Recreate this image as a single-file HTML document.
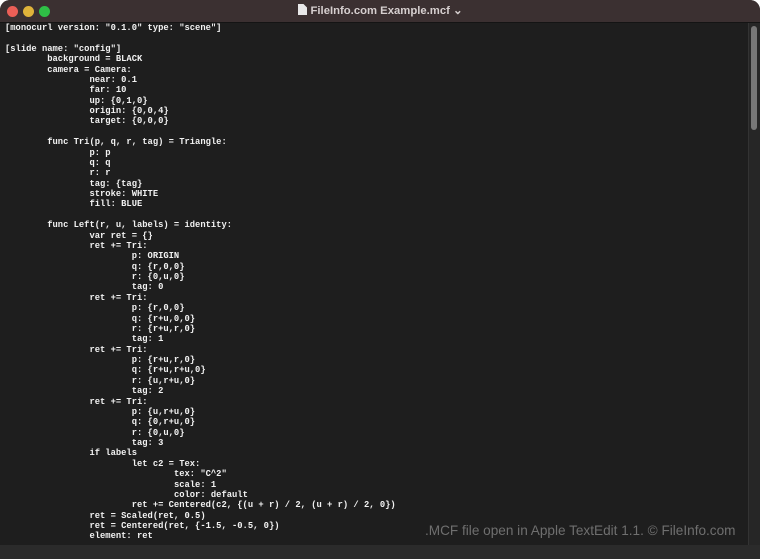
<!DOCTYPE html>
<html><head><style>
html,body{margin:0;padding:0;width:760px;height:559px;overflow:hidden;background:#fff}
.win{position:absolute;left:0;top:0;width:760px;height:559px;background:#2b2b2b;border-radius:10px 10px 0 0;overflow:hidden}
.tb{position:absolute;left:0;top:0;width:760px;height:22px;background:#3b3031;border-bottom:1px solid #141414}
.dot{position:absolute;top:6px;width:11px;height:11px;border-radius:50%}
.title{position:absolute;left:0;right:0;top:4px;text-align:center;font:bold 11.3px "Liberation Sans",sans-serif;color:#d6cfcf}
.ed{position:absolute;left:0;top:23px;width:748px;height:522px;background:#1e1e1e}
pre{margin:0;position:absolute;left:5px;top:0px;font:bold 8.8px/10.37px "Liberation Mono",monospace;color:#f2f2f2;tab-size:8;-moz-tab-size:8}
.sb{position:absolute;left:748px;top:23px;width:12px;height:522px;background:#262626;border-left:1px solid #333}
.th{position:absolute;left:751px;top:26px;width:6px;height:104px;border-radius:3px;background:#777}
.wm{position:absolute;left:425px;font:13.6px "Liberation Sans",sans-serif;color:#6f6f6f}
</style></head><body>
<div class="win">
<div class="tb">
<div class="dot" style="left:7px;background:#ec5f57"></div>
<div class="dot" style="left:23px;background:#e0b33a"></div>
<div class="dot" style="left:39px;background:#2fbf46"></div>
<div class="title"><svg width="9" height="11" style="vertical-align:-1px;margin-right:4px"><path d="M0 0h5.5l3.5 3.5v7.5H0z" fill="#e8e8e8"/></svg>FileInfo.com Example.mcf ⌄</div>
</div>
<div class="ed"><pre>[monocurl version: "0.1.0" type: "scene"]

[slide name: "config"]
	background = BLACK
	camera = Camera:
		near: 0.1
		far: 10
		up: {0,1,0}
		origin: {0,0,4}
		target: {0,0,0}

	func Tri(p, q, r, tag) = Triangle:
		p: p
		q: q
		r: r
		tag: {tag}
		stroke: WHITE
		fill: BLUE

	func Left(r, u, labels) = identity:
		var ret = {}
		ret += Tri:
			p: ORIGIN
			q: {r,0,0}
			r: {0,u,0}
			tag: 0
		ret += Tri:
			p: {r,0,0}
			q: {r+u,0,0}
			r: {r+u,r,0}
			tag: 1
		ret += Tri:
			p: {r+u,r,0}
			q: {r+u,r+u,0}
			r: {u,r+u,0}
			tag: 2
		ret += Tri:
			p: {u,r+u,0}
			q: {0,r+u,0}
			r: {0,u,0}
			tag: 3
		if labels
			let c2 = Tex:
				tex: "C^2"
				scale: 1
				color: default
			ret += Centered(c2, {(u + r) / 2, (u + r) / 2, 0})
		ret = Scaled(ret, 0.5)
		ret = Centered(ret, {-1.5, -0.5, 0})
		element: ret</pre>
<div class="wm" style="top:500px">.MCF file open in Apple TextEdit 1.1. © FileInfo.com</div>
</div>
<div class="sb"></div><div class="th"></div>
</div>
</body></html>
